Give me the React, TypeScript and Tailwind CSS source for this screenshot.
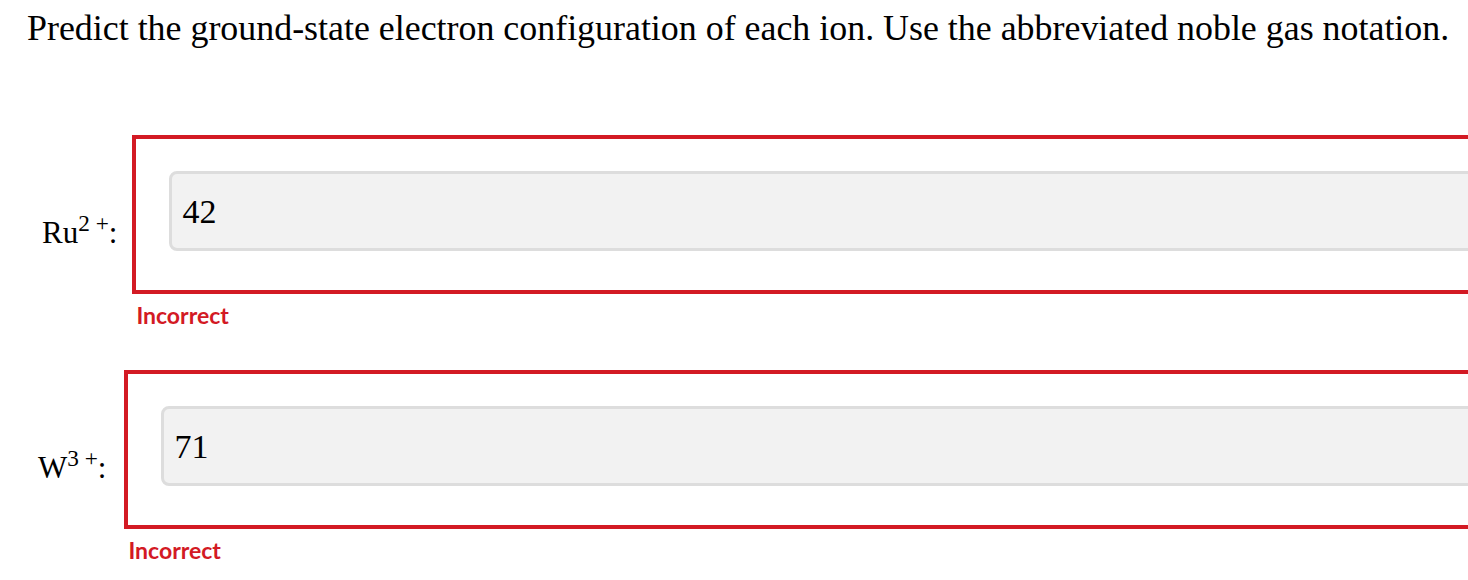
const serif = { fontFamily: '"Liberation Serif", "Times New Roman", serif' };

type Answer = {
  ion: string;
  charge: string;
  value: string;
  labelPad: string;
  gap: string;
};

const answers: Answer[] = [
  { ion: "Ru", charge: "2 +", value: "42", labelPad: "pl-[42px]", gap: "gap-[15px]" },
  { ion: "W", charge: "3 +", value: "71", labelPad: "pl-[38px]", gap: "gap-[18px]" },
];

function AnswerRow({ answer }: { answer: Answer }) {
  return (
    <div className={`flex items-start ${answer.gap}`}>
      <div
        className={`${answer.labelPad} mt-[80px] text-[31px] leading-[36px] text-black whitespace-nowrap`}
        style={serif}
      >
        {answer.ion}
        <sup>{answer.charge}</sup>:
      </div>
      <div className="flex flex-col">
        <div className="w-[1500px] h-[159px] border-4 border-[#d31a24] pt-[32px] pl-[33px]">
          <div
            className="h-[80px] rounded-[8px] border-[3px] border-[#dddddd] bg-[#f2f2f2] pl-[10px] pt-[18px] text-[34px] leading-[40px] text-black"
            style={serif}
          >
            {answer.value}
          </div>
        </div>
        <div className="mt-[7px] ml-[4px] text-[23px] leading-[28px] font-bold text-[#d31a24] font-['Lato',sans-serif]">
          Incorrect
        </div>
      </div>
    </div>
  );
}

export default function App() {
  return (
    <div className="w-[1468px] h-[580px] overflow-hidden bg-white">
      <h1
        className="pl-[27px] pt-[8px] text-[35.9px] leading-[40px] font-normal text-black whitespace-nowrap"
        style={serif}
      >
        Predict the ground-state electron configuration of each ion. Use the abbreviated noble gas notation.
      </h1>
      <div className="mt-[87px] flex flex-col gap-[41px]">
        {answers.map((answer) => (
          <AnswerRow key={answer.ion} answer={answer} />
        ))}
      </div>
    </div>
  );
}
